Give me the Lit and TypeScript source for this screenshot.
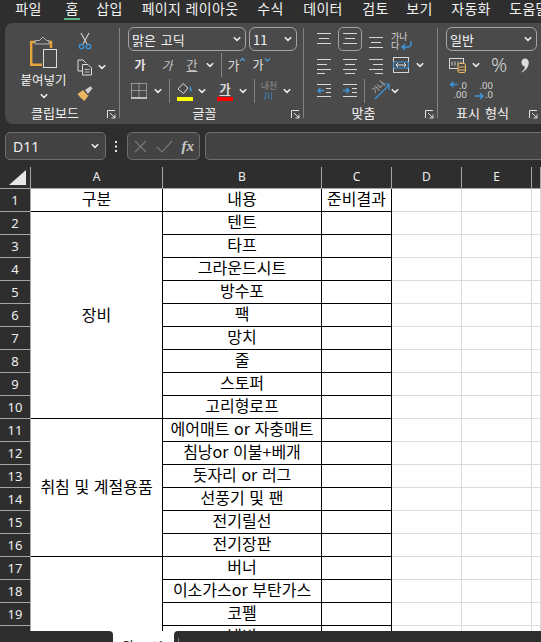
import { LitElement, html, css, svg } from "lit";
import { customElement } from "lit/decorators.js";

const chev = html`<svg class="chev" width="8" height="6" viewBox="0 0 8 6"><path d="M.8 1.2 4 4.4 7.2 1.2" fill="none" stroke="#efefef" stroke-width="1.5"/></svg>`;
const lines = (rows: [number, number, number, string?][]) => html`<svg width="18" height="18" viewBox="0 0 18 18">${rows.map(
  ([x1, x2, y, c]) => svg`<path d="M${x1} ${y}.5H${x2}" stroke="${c || "#d8d8d8"}" stroke-width="1"/>`)}</svg>`;
const launcher = html`<svg class="launch" width="9" height="9" viewBox="0 0 9 9"><path d="M.5 8V.5H8M3 3l5 5M8 4.5V8H4.5" fill="none" stroke="#e0e0e0"/></svg>`;
const vsep = html`<i class="vs"></i>`;

const rows: [string, string?][] = [
  ["텐트"], ["타프"], ["그라운드시트"], ["방수포"], ["팩"], ["망치"], ["줄"], ["스토퍼"], ["고리형로프"],
  ["에어매트 or 자충매트"], ["침낭or 이불+베개"], ["돗자리 or 러그"], ["선풍기 및 팬"], ["전기릴선"], ["전기장판"],
  ["버너"], ["이소가스or 부탄가스"], ["코펠"], ["냄비"],
];
const groups: [number, number, string][] = [[2, 9, "장비"], [11, 6, "취침 및 계절용품"], [17, 6, ""]];

@customElement("app-root")
export class AppRoot extends LitElement {
  static styles = css`
    :host { display:flex; flex-direction:column; height:642px; width:541px; overflow:hidden; background:#2e2e2e; color:#f0f0f0;
      font-family:"Noto Sans CJK KR","Noto Sans",sans-serif; }
    .tabs { display:flex; height:23px; flex:none; font-size:14px; line-height:17px; letter-spacing:.3px; word-spacing:1px; color:#f2f2f2; white-space:nowrap; }
    .tabs span { flex:none; position:relative; text-align:center; }
    .t1{margin-left:15px;width:27px}.t2{margin-left:23px;width:14px}.t3{margin-left:17px;width:27px}.t4{margin-left:18px;width:98px}
    .t5{margin-left:18px;width:27px}.t6{margin-left:19px;width:40px}.t7{margin-left:19px;width:27px}.t8{margin-left:17px;width:27px}
    .t9{margin-left:18px;width:40px}.t10{margin-left:18px;width:40px}
    .t2::after { content:""; position:absolute; left:-1px; right:-1px; top:18px; height:2px; background:#5fb58a; }
    .ribbon { flex:none; height:101px; margin-left:5px; background:#4a4a4a; border-radius:8px 0 0 8px; display:flex; }
    .sep { flex:none; width:1px; margin:5px 0 6px; background:#828282; }
    .g { flex:none; display:flex; flex-direction:column; position:relative; padding-top:4px; box-sizing:border-box; }
    .g1{width:114px}.g2{width:183px}.g3{width:133px}.g4{width:103px}
    .lab { position:absolute; left:0; right:14px; top:81px; text-align:center; font-size:13px; word-spacing:2px; line-height:18px; color:#f2f2f2; }
    .launch { position:absolute; right:3px; top:87px; }
    .r { display:grid; height:24px; margin-bottom:2px; align-items:center; justify-items:center; }
    .vs { display:block; width:1px; height:24px; background:#828282; }
    .chev { display:block; }
    svg { display:block; }
    .clip { display:grid; grid-template-columns:68px 23px 12px; grid-template-rows:26px 26px 26px; padding-top:1px; justify-items:center; align-items:center; }
    .paste { grid-row:1 / 4; display:flex; flex-direction:column; align-items:center; margin-left:9px; width:58px; font-size:12.5px; line-height:16px; white-space:nowrap; color:#f0f0f0; }
    .paste svg:first-child { margin-bottom:3px; }
    .paste .chev { margin-top:5px; }
    .combo { border:1px solid #a3a3a3; border-radius:6px; box-sizing:border-box; height:24px; display:flex; align-items:center; justify-content:space-between; padding:0 4px 0 3px; font-size:13px; word-spacing:2px; color:#f4f4f4; white-space:nowrap; }
    .r1f { grid-template-columns:118px 48px; column-gap:3px; padding-left:8px; justify-items:stretch; }
    .r2f { grid-template-columns:26px 28px 22px 14px 9px 22px 27px; padding-left:7px; }
    .r3f { grid-template-columns:28px 10px 13px 17px 18px 28px 8px 14px 16px 20px; padding-left:5px; }
    .ga { font-size:12px; line-height:16px; color:#e6e6e6; display:flex; align-items:flex-start; }
    .b { font-weight:700; }
    .i { font-style:italic; color:#c4c4c4; }
    .u { text-decoration:underline; color:#c8c8c8; }
    .ga13 { font-size:13px; color:#d8d8d8; }
    .stack { display:flex; flex-direction:column; align-items:center; }
    .col { font-size:12px; font-weight:700; line-height:13px; color:#dcdcdc; text-decoration:underline; }
    .bar { width:16px; height:4px; background:#f00; margin-top:2px; }
    .yel { background:#ff0; }
    .hanja { font-size:9px; line-height:10px; color:#8c8c8c; white-space:nowrap; }
    .hanja b { display:block; font-weight:400; color:#3c8fd0; text-align:center; letter-spacing:1px; }
    .r1a { grid-template-columns:26px 26px 26px 24px; padding-left:7px; }
    .r2a { grid-template-columns:26px 26px 26px 24px 14px; padding-left:7px; }
    .r3a { grid-template-columns:26px 26px 3px 25px 8px; padding-left:7px; }
    .sel { width:24px; height:24px; box-sizing:border-box; border:1px solid #a3a3a3; border-radius:5px; display:flex; align-items:center; justify-content:center; }
    .low { margin-top:6px; }
    .wrap { font-size:9px; line-height:9px; color:#d8d8d8; position:relative; width:20px; height:18px; margin-top:3px; white-space:nowrap; }
    .wrap svg { position:absolute; left:9px; top:8px; }
    .orient { position:relative; width:18px; height:20px; margin-left:6px; }
    .orient span { position:absolute; left:-2px; top:1px; font-size:8px; line-height:10px; color:#bdbdbd; transform:rotate(-45deg); white-space:nowrap; }
    .orient svg { position:absolute; left:0; top:0; }
    .r1n { padding-left:8px; grid-template-columns:91px; justify-items:stretch; }
    .r2n { padding-left:8px; grid-template-columns:24px 12px 34px 18px; }
    .r3n { padding-left:8px; grid-template-columns:24px 28px; }
    .pct { font-size:20px; line-height:24px; color:#d4d4d4; font-family:"Noto Sans",sans-serif; font-weight:300; }
    .dec { position:relative; width:18px; height:20px; font-size:9.5px; line-height:9px; color:#d4d4d4; font-family:"Noto Sans",sans-serif; text-align:right; }
    .dec svg { position:absolute; left:0; top:0; }
    .fbar { flex:none; display:flex; height:28px; margin-top:8px; align-items:stretch; }
    .name { width:101px; margin-left:5px; box-sizing:border-box; height:28px; background:#434343; border:1px solid #6e6e6e; border-radius:5px; display:flex; align-items:center; justify-content:space-between; padding:0 6px 0 7px; font:14px "Noto Sans",sans-serif; color:#f0f0f0; }
    .dots { width:21px; display:flex; justify-content:center; align-items:center; }
    .fx { width:73px; box-sizing:border-box; background:#434343; border:1px solid #6e6e6e; border-radius:5px; display:flex; align-items:center; justify-content:space-between; padding:0 5px 0 6px; }
    .fx em { font:italic 700 15px "Liberation Serif",serif; color:#c9c9c9; }
    .input { flex:1; margin-left:5px; background:#434343; border:1px solid #6e6e6e; border-right:0; border-radius:5px 0 0 5px; }
    .gap { flex:none; height:7px; }
    .sheet { flex:1 1 0; min-height:0; overflow:hidden; background:#fff; display:grid;
      grid-template-columns:31px 132px 159px 70px 70px 70px 9px; grid-auto-rows:23px; grid-template-rows:22px; color:#000; }
    .hd { background:#2e2e2e; box-sizing:border-box; border-right:1px solid #a6a6a6; border-bottom:1px solid #a6a6a6; color:#eee; font:12px/20px "Noto Sans",sans-serif; text-align:center; }
    .corner { display:flex; align-items:flex-end; justify-content:flex-end; padding:0 4px 3px 0; }
    .rh { background:#2e2e2e; box-sizing:border-box; border-right:1px solid #a6a6a6; border-bottom:1px solid #a6a6a6; color:#eee; font:13px/23px "Noto Sans",sans-serif; text-align:center; }
    .c { box-sizing:border-box; border-right:1px solid #000; border-bottom:1px solid #000; font-size:16px; line-height:18px; word-spacing:1px; text-align:center; white-space:nowrap; overflow:visible; color:#000; }
    .e { box-sizing:border-box; border-right:1px solid #dcdcdc; border-bottom:1px solid #dcdcdc; }
    .m { display:flex; align-items:center; justify-content:center; padding-bottom:3px; }
    .tabsbar { flex:none; height:11px; overflow:hidden; display:flex; background:#fff; }
    .d1 { width:113px; background:#2e2e2e; border-radius:0 4px 0 0; }
    .st { width:61px; text-align:center; color:#222; font:13px/17px "Noto Sans",sans-serif; padding-top:6px; box-sizing:border-box; }
    .d2 { flex:1; background:#2e2e2e; border-radius:4px 0 0 0; padding:7px 0 0 4px; box-sizing:border-box; }
    .d2 i { display:block; width:1px; height:100%; background:#777; }
  `;

  render() {
    const spanOf = (i: number) => groups.find((g) => g[0] === i);
    const cols = ["A", "B", "C", "D", "E"];
    const gridRows: unknown[] = [];
    gridRows.push(html`<div class="rh">1</div><div class="c">구분</div><div class="c">내용</div><div class="c">준비결과</div><div class="e"></div><div class="e"></div><div class="e"></div>`);
    rows.forEach((r, idx) => {
      const n = idx + 2;
      const g = spanOf(n);
      gridRows.push(html`<div class="rh">${n}</div>
        ${g ? html`<div class="c m" style="grid-row:span ${g[1]}">${g[2]}</div>` : ""}
        <div class="c">${r[0]}</div><div class="c"></div><div class="e"></div><div class="e"></div><div class="e"></div>`);
    });
    return html`
      <div class="tabs">
        <span class="t1">파일</span><span class="t2">홈</span><span class="t3">삽입</span><span class="t4">페이지 레이아웃</span><span class="t5">수식</span><span class="t6">데이터</span><span class="t7">검토</span><span class="t8">보기</span><span class="t9">자동화</span><span class="t10">도움말</span>
      </div>
      <div class="ribbon">
        <div class="g g1">
          <div class="clip">
            <div class="paste">
              <svg width="32" height="34" viewBox="0 0 32 34" fill="none">
                <path d="M9 7H3.2V29.8H14" stroke="#e8a33d" stroke-width="2.4"/><path d="M19 7H23V13" stroke="#e8a33d" stroke-width="2.4"/>
                <path d="M7 9V5.5H11.5L15 2L18.5 5.5H21V9Z" stroke="#b5b5b5" fill="#4a4a4a"/>
                <rect x="15.5" y="14.5" width="13" height="18" stroke="#dcdcdc" fill="#4a4a4a"/>
              </svg>
              붙여넣기
              ${chev}
            </div>
            <svg width="14" height="18" viewBox="0 0 14 18" fill="none"><path d="M3 1 9 12M11 1 5 12" stroke="#c8c8c8" stroke-width="1.2"/><circle cx="3.5" cy="14.5" r="2.2" stroke="#3e97dc" stroke-width="1.3"/><circle cx="10.5" cy="14.5" r="2.2" stroke="#3e97dc" stroke-width="1.3"/></svg>
            <span></span>
            <svg width="18" height="17" viewBox="0 0 18 17" fill="none"><path d="M6 12H2V1H7L10 4" stroke="#dedede"/><path d="M6.5 5.5H12L15.5 9V16H6.5Z" stroke="#dedede" fill="#4a4a4a"/><path d="M8.5 10.5H13.5M8.5 13H13.5" stroke="#bdbdbd"/></svg>
            ${chev}
            <svg width="18" height="17" viewBox="0 0 18 17" fill="none"><path d="M1.5 9 7 5 12.5 10.5 8.5 16C6 14 3.5 12 1.5 9Z" fill="#e9b760"/><path d="M8 5.5 10 8 12 10" stroke="#4a4a4a"/><path d="M9 5 14.5 1.2 16.5 3.2 12 9" fill="#cfcfcf"/></svg>
            <span></span>
          </div>
          <div class="lab">클립보드</div>${launcher}
        </div>
        <div class="sep"></div>
        <div class="g g2">
          <div class="r r1f">
            <div class="combo">맑은 고딕 ${chev}</div>
            <div class="combo">11 ${chev}</div>
          </div>
          <div class="r r2f">
            <span class="ga b">가</span><span class="ga i">가</span><span class="ga u">간</span>${chev}${vsep}
            <span class="ga ga13">가<svg width="7" height="6" viewBox="0 0 7 6"><path d="M1 4 3.5 1.5 6 4" stroke="#4a9bd8" fill="none" stroke-width="1.3"/></svg></span>
            <span class="ga">가<svg width="7" height="6" viewBox="0 0 7 6"><path d="M1 1.5 3.5 4 6 1.5" stroke="#4a9bd8" fill="none" stroke-width="1.3"/></svg></span>
          </div>
          <div class="r r3f">
            <svg width="16" height="16" viewBox="0 0 16 16" fill="none"><path d="M.5.5H15.5V14M.5.5V14M8 .5V14M.5 7.5H15.5" stroke="#d8d8d8" stroke-dasharray="1 1"/><path d="M0 15H16" stroke="#f0f0f0" stroke-width="1.4"/></svg>
            ${chev}${vsep}
            <div class="stack"><svg width="16" height="13" viewBox="0 0 16 13" fill="none"><path d="M1 7 6 1.5 11 6 6.5 11.5Z" stroke="#dcdcdc"/><path d="M13 4C15 6 15 9 14 10 13 9 12 7 13 4Z" fill="#3e97dc"/></svg><div class="bar yel"></div></div>
            ${chev}
            <div class="stack"><span class="col">가</span><div class="bar"></div></div>
            ${chev}${vsep}
            <div class="hanja">내천<b>川</b></div>${chev}
          </div>
          <div class="lab">글꼴</div>${launcher}
        </div>
        <div class="sep"></div>
        <div class="g g3">
          <div class="r r1a">
            ${lines([[2, 16, 3], [4, 14, 8], [2, 16, 13]])}
            <div class="sel">${lines([[2, 16, 3], [4, 14, 8], [2, 16, 13]])}</div>
            <svg class="low" width="18" height="18" viewBox="0 0 18 18"><path d="M2 4.5H16M4 9.5H14M2 14.5H16" stroke="#d8d8d8"/></svg>
            <div class="wrap">가나<br />다<svg width="13" height="11" viewBox="0 0 13 11" fill="none"><path d="M11 1V4C11 6 9 7 7 7H2M5 4 2 7 5 10" stroke="#3e97dc" stroke-width="1.4"/></svg></div>
          </div>
          <div class="r r2a">
            ${lines([[2, 16, 3], [2, 12, 8], [2, 16, 13], [2, 10, 17]])}
            ${lines([[2, 16, 3], [4, 14, 8], [2, 16, 13], [4, 14, 17]])}
            ${lines([[2, 16, 3], [6, 16, 8], [2, 16, 13], [8, 16, 17]])}
            <svg width="16" height="16" viewBox="0 0 16 16" fill="none"><rect x=".5" y=".5" width="15" height="15" stroke="#d8d8d8"/><path d="M.5 5H15.5M.5 11H15.5" stroke="#3e97dc"/><path d="M.5 5V11M15.5 5V11" stroke="#3e97dc" stroke-width="1.5"/><path d="M3 8H13M5 6 3 8 5 10M11 6 13 8 11 10" stroke="#d8e8f4"/></svg>
            ${chev}
          </div>
          <div class="r r3a">
            <svg width="18" height="18" viewBox="0 0 18 18" fill="none"><path d="M2 2.5H16M11 6.5H16M11 10.5H16M2 14.5H16" stroke="#d8d8d8"/><path d="M9 8.5H3M5.5 6 3 8.5 5.5 11" stroke="#3e97dc" stroke-width="1.4"/></svg>
            <svg width="18" height="18" viewBox="0 0 18 18" fill="none"><path d="M2 2.5H16M11 6.5H16M11 10.5H16M2 14.5H16" stroke="#d8d8d8"/><path d="M2 8.5H8M5.5 6 8 8.5 5.5 11" stroke="#3e97dc" stroke-width="1.4"/></svg>
            ${vsep}
            <div class="orient"><span>가나</span><svg width="18" height="20" viewBox="0 0 18 20" fill="none"><path d="M2 18 16 4M10 3H16V9" stroke="#3e97dc" stroke-width="1.2"/></svg></div>
            ${chev}
          </div>
          <div class="lab">맞춤</div>${launcher}
        </div>
        <div class="sep"></div>
        <div class="g g4">
          <div class="r r1n"><div class="combo">일반 ${chev}</div></div>
          <div class="r r2n">
            <svg width="18" height="18" viewBox="0 0 18 18" fill="none"><rect x=".5" y="2.5" width="14" height="10" stroke="#d8d8d8"/><path d="M3 5.5V9.5M6 5.5V9.5M9 5.5V9.5M12 5.5V9.5" stroke="#d0d0d0"/><rect x="9" y="7.5" width="7.5" height="9" rx="1.5" fill="#4a4a4a" stroke="#e8b864"/><path d="M9 11H16.5M9 14H16.5" stroke="#e8b864"/></svg>
            ${chev}<span class="pct">%</span>
            <svg width="8" height="15" viewBox="0 0 8 15"><path d="M4 .5C6.3.5 7.8 2.2 7.8 4.6 7.8 8.8 5 12.4 1 14.6L.5 14C2.6 12.2 3.8 10.4 4 8.4 2 8.4.5 6.6.5 4.4.5 2 2 .5 4 .5Z" fill="#dcdcdc"/></svg>
          </div>
          <div class="r r3n">
            <div class="dec">.0<br />.00<svg width="9" height="8" viewBox="0 0 9 8" fill="none"><path d="M8.5 3.5H1.5M4.5 .8 1.5 3.5 4.5 6.2" stroke="#3e97dc" stroke-width="1.3"/></svg></div>
            <div class="dec">.00<br />.0<svg width="9" height="20" viewBox="0 0 9 20" fill="none"><path d="M0 15H8M5 12.3 8 15 5 17.7" stroke="#3e97dc" stroke-width="1.3"/></svg></div>
          </div>
          <div class="lab">표시 형식</div>${launcher}
        </div>
      </div>
      <div class="fbar">
        <div class="name">D11 ${chev}</div>
        <div class="dots"><svg width="3" height="11" viewBox="0 0 3 11"><path d="M0 0h2v2H0zM0 4.5h2v2H0zM0 9h2v2H0z" fill="#e8e8e8"/></svg></div>
        <div class="fx">
          <svg width="13" height="13" viewBox="0 0 13 13" fill="none"><path d="M1 1 12 12M12 1 1 12" stroke="#777" stroke-width="1.2"/></svg>
          <svg width="17" height="13" viewBox="0 0 17 13" fill="none"><path d="M1 7 6 12 16 1" stroke="#777" stroke-width="1.2"/></svg>
          <em>fx</em>
        </div>
        <div class="input"></div>
      </div>
      <div class="gap"></div>
      <div class="sheet">
        <div class="hd corner"><svg width="17" height="15" viewBox="0 0 17 15"><path d="M17 0V15H0Z" fill="#e8e8e8"/></svg></div>
        ${cols.map((c) => html`<div class="hd">${c}</div>`)}<div class="hd"></div>
        ${gridRows}
      </div>
      <div class="tabsbar"><div class="d1"></div><div class="st">Sheet1</div><div class="d2"><i></i></div></div>
    `;
  }
}
